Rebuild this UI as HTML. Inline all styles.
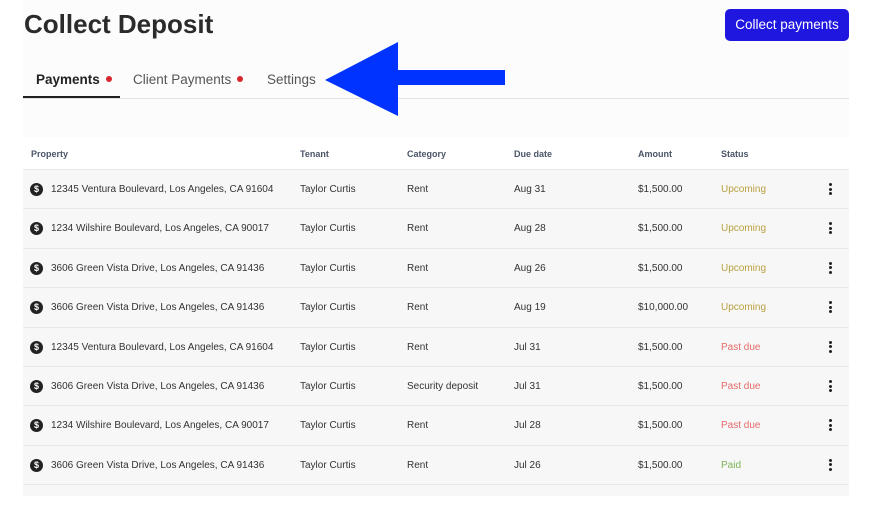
<!DOCTYPE html>
<html><head><style>
*{margin:0;padding:0;box-sizing:border-box}
body{width:890px;height:496px;background:#fff;font-family:"Liberation Sans",sans-serif;position:relative;overflow:hidden}
.top{position:absolute;left:23px;top:0;width:826px;height:137px;background:#fcfcfc}
h1{position:absolute;left:24px;top:9px;font-size:26px;font-weight:bold;color:#2b2b2b}
.btn{position:absolute;left:725px;top:9px;width:124px;height:32px;background:#1f16e0;border-radius:5px;color:#fff;font-size:13.5px;line-height:32px;text-align:center}
.tabs{position:absolute;left:23px;top:98px;width:826px;border-top:1px solid #e2e2e2}
.tab{position:absolute;top:72px;font-size:13.5px;color:#555}
.dot{display:inline-block;width:6px;height:6px;border-radius:50%;background:#d9262c;margin-left:6px;vertical-align:2px}
.ul{position:absolute;left:23px;top:96px;width:97px;height:2px;background:#222}
.hdr{position:absolute;top:149px;font-size:9px;color:#4a5568;font-weight:bold}
.tbl{position:absolute;left:23px;top:169px;width:826px;height:327px;background:#f7f7f7}
.row{position:absolute;left:0;width:826px;height:39.4px;border-top:1px solid #e8e8e8;font-size:10px;color:#333}
.row span{position:absolute;top:14px}
.ic{position:absolute;left:7px;top:13px;width:13px;height:13px;border-radius:50%;background:#222;color:#fff;font-size:9px;font-weight:bold;text-align:center;line-height:13px}
.k{position:absolute;left:806px;top:13px;width:3px}
.k i{display:block;width:3px;height:3px;background:#222;border-radius:50%;margin-bottom:1.5px}
</style></head><body>
<div class="top"></div>
<h1>Collect Deposit</h1>
<div class="btn">Collect payments</div>
<div class="tab" style="left:36px;color:#222;font-weight:bold">Payments<span class="dot"></span></div>
<div class="tab" style="left:133px">Client Payments<span class="dot"></span></div>
<div class="tab" style="left:267px">Settings</div>
<div class="tabs"></div>
<div class="ul"></div>
<svg style="position:absolute;left:0;top:0" width="890" height="140"><polygon points="325,80 398,42 398,70 505,70 505,85 398,85 398,116" fill="#0033ff"/></svg>
<div class="hdr" style="left:31px">Property</div>
<div class="hdr" style="left:300px">Tenant</div>
<div class="hdr" style="left:407px">Category</div>
<div class="hdr" style="left:514px">Due date</div>
<div class="hdr" style="left:638px">Amount</div>
<div class="hdr" style="left:721px">Status</div>
<div class="tbl">
<div class="row" style="top:0"><div class="ic">$</div><span style="left:28px">12345 Ventura Boulevard, Los Angeles, CA 91604</span><span style="left:277px">Taylor Curtis</span><span style="left:384px">Rent</span><span style="left:491px">Aug 31</span><span style="left:615px">$1,500.00</span><span style="left:698px;color:#b8a040">Upcoming</span><div class="k"><i></i><i></i><i></i></div></div>
<div class="row" style="top:39.4px"><div class="ic">$</div><span style="left:28px">1234 Wilshire Boulevard, Los Angeles, CA 90017</span><span style="left:277px">Taylor Curtis</span><span style="left:384px">Rent</span><span style="left:491px">Aug 28</span><span style="left:615px">$1,500.00</span><span style="left:698px;color:#b8a040">Upcoming</span><div class="k"><i></i><i></i><i></i></div></div>
<div class="row" style="top:78.8px"><div class="ic">$</div><span style="left:28px">3606 Green Vista Drive, Los Angeles, CA 91436</span><span style="left:277px">Taylor Curtis</span><span style="left:384px">Rent</span><span style="left:491px">Aug 26</span><span style="left:615px">$1,500.00</span><span style="left:698px;color:#b8a040">Upcoming</span><div class="k"><i></i><i></i><i></i></div></div>
<div class="row" style="top:118.2px"><div class="ic">$</div><span style="left:28px">3606 Green Vista Drive, Los Angeles, CA 91436</span><span style="left:277px">Taylor Curtis</span><span style="left:384px">Rent</span><span style="left:491px">Aug 19</span><span style="left:615px">$10,000.00</span><span style="left:698px;color:#b8a040">Upcoming</span><div class="k"><i></i><i></i><i></i></div></div>
<div class="row" style="top:157.6px"><div class="ic">$</div><span style="left:28px">12345 Ventura Boulevard, Los Angeles, CA 91604</span><span style="left:277px">Taylor Curtis</span><span style="left:384px">Rent</span><span style="left:491px">Jul 31</span><span style="left:615px">$1,500.00</span><span style="left:698px;color:#e86a6a">Past due</span><div class="k"><i></i><i></i><i></i></div></div>
<div class="row" style="top:197px"><div class="ic">$</div><span style="left:28px">3606 Green Vista Drive, Los Angeles, CA 91436</span><span style="left:277px">Taylor Curtis</span><span style="left:384px">Security deposit</span><span style="left:491px">Jul 31</span><span style="left:615px">$1,500.00</span><span style="left:698px;color:#e86a6a">Past due</span><div class="k"><i></i><i></i><i></i></div></div>
<div class="row" style="top:236.4px"><div class="ic">$</div><span style="left:28px">1234 Wilshire Boulevard, Los Angeles, CA 90017</span><span style="left:277px">Taylor Curtis</span><span style="left:384px">Rent</span><span style="left:491px">Jul 28</span><span style="left:615px">$1,500.00</span><span style="left:698px;color:#e86a6a">Past due</span><div class="k"><i></i><i></i><i></i></div></div>
<div class="row" style="top:275.8px"><div class="ic">$</div><span style="left:28px">3606 Green Vista Drive, Los Angeles, CA 91436</span><span style="left:277px">Taylor Curtis</span><span style="left:384px">Rent</span><span style="left:491px">Jul 26</span><span style="left:615px">$1,500.00</span><span style="left:698px;color:#7cb356">Paid</span><div class="k"><i></i><i></i><i></i></div></div>
<div class="row" style="top:315.2px"></div>
</div>
</body></html>
